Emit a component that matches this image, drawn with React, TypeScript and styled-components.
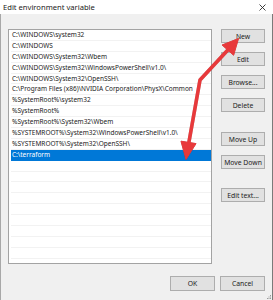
import styled, { createGlobalStyle } from 'styled-components';

const GlobalStyle = createGlobalStyle`
  html, body {
    margin: 0;
    padding: 0;
    background: #ffffff;
  }
  body {
    font-family: "Noto Sans", "Liberation Sans", sans-serif;
    color: #000000;
  }
`;

const paths = [
  'C:\\WINDOWS\\system32',
  'C:\\WINDOWS',
  'C:\\WINDOWS\\System32\\Wbem',
  'C:\\WINDOWS\\System32\\WindowsPowerShell\\v1.0\\',
  'C:\\WINDOWS\\System32\\OpenSSH\\',
  'C:\\Program Files (x86)\\NVIDIA Corporation\\PhysX\\Common',
  '%SystemRoot%\\system32',
  '%SystemRoot%',
  '%SystemRoot%\\System32\\Wbem',
  '%SYSTEMROOT%\\System32\\WindowsPowerShell\\v1.0\\',
  '%SYSTEMROOT%\\System32\\OpenSSH\\',
  'C:\\terraform',
];

const SELECTED = 11;
const ROW_COUNT = 22;

const rows = Array.from({ length: ROW_COUNT }, (_, i) => paths[i] ?? '');

const CloseIcon = () => (
  <svg width="7" height="7" viewBox="0 0 7 7">
    <path d="M0.5 0.5 L6.5 6.5 M6.5 0.5 L0.5 6.5" stroke="#2b2b2b" strokeWidth="0.9" />
  </svg>
);

const Arrow = () => (
  <ArrowSvg width="273" height="300" viewBox="0 0 273 300">
    <g fill="#e8393b" stroke="#e8393b" strokeLinejoin="round">
      <path
        d="M188.6 144 L200 80 L227.8 50"
        fill="none"
        strokeWidth="3.6"
        strokeLinecap="round"
      />
      <polygon points="238.5,38.5 233.6,55.2 222.1,45" strokeWidth="1" />
      <polygon points="186,159.5 196,143.6 181,141.2" strokeWidth="1" />
    </g>
  </ArrowSvg>
);

const ResizeGrip = () => (
  <Grip width="4" height="4" viewBox="0 0 4 4">
    <rect x="3" y="0" width="1" height="1" fill="#9a9a9a" />
    <rect x="1.5" y="1.5" width="1" height="1" fill="#9a9a9a" />
    <rect x="3" y="1.5" width="1" height="1" fill="#9a9a9a" />
    <rect x="0" y="3" width="1" height="1" fill="#9a9a9a" />
    <rect x="1.5" y="3" width="1" height="1" fill="#9a9a9a" />
    <rect x="3" y="3" width="1" height="1" fill="#9a9a9a" />
  </Grip>
);

export default function App() {
  return (
    <>
      <GlobalStyle />
      <DialogWindow>
        <TitleBar>
          <Title>Edit environment variable</Title>
          <CloseIcon />
        </TitleBar>
        <DialogBody>
          <MainArea>
            <PathList>
              {rows.map((text, i) => (
                <PathRow key={i} selected={i === SELECTED}>
                  {text}
                </PathRow>
              ))}
            </PathList>
            <ButtonColumn>
              <DialogButton>New</DialogButton>
              <DialogButton>Edit</DialogButton>
              <DialogButton>Browse...</DialogButton>
              <DialogButton>Delete</DialogButton>
              <DialogButton gapBefore={20}>Move Up</DialogButton>
              <DialogButton>Move Down</DialogButton>
              <DialogButton gapBefore={19}>Edit text...</DialogButton>
            </ButtonColumn>
          </MainArea>
          <Footer>
            <DialogButton wide>OK</DialogButton>
            <DialogButton wide>Cancel</DialogButton>
          </Footer>
          <ResizeGrip />
        </DialogBody>
        <Arrow />
      </DialogWindow>
    </>
  );
}

const DialogWindow = styled.div`
  position: relative;
  width: 273px;
  height: 300px;
  overflow: hidden;
  display: flex;
  flex-direction: column;
`;

const TitleBar = styled.div`
  display: flex;
  align-items: center;
  justify-content: space-between;
  height: 14px;
  padding: 0 7px 0 3px;
  background: #ffffff;
  box-sizing: border-box;
`;

const Title = styled.span`
  font-size: 7.6px;
  line-height: 14px;
  color: #1a1a1a;
  white-space: nowrap;
`;

const DialogBody = styled.div`
  position: relative;
  flex: 1;
  display: flex;
  flex-direction: column;
  padding: 15px 7px 9px 7px;
  background: #f0f0f0;
  border: 1px solid #7a7a7a;
  border-top: none;
  border-left-color: #a8a8a8;
  box-sizing: border-box;
`;

const MainArea = styled.div`
  display: flex;
  gap: 9px;
  height: 235px;
`;

const PathList = styled.div`
  width: 204px;
  height: 235px;
  padding-left: 2px;
  background: #ffffff;
  border: 1px solid #a3a3a3;
  box-sizing: border-box;
  overflow: hidden;
`;

const PathRow = styled.div<{ selected: boolean }>`
  height: 10.9px;
  line-height: 10.4px;
  padding-left: 1px;
  font-size: 6.5px;
  white-space: nowrap;
  overflow: hidden;
  box-sizing: border-box;
  border-bottom: 1px solid ${({ selected }) => (selected ? '#0078d7' : '#f2f2f2')};
  background: ${({ selected }) => (selected ? '#0078d7' : 'transparent')};
  color: ${({ selected }) => (selected ? '#ffffff' : '#1a1a1a')};
`;

const ButtonColumn = styled.div`
  display: flex;
  flex-direction: column;
  gap: 9px;
  width: 44px;
`;

const DialogButton = styled.div<{ gapBefore?: number; wide?: boolean }>`
  display: flex;
  align-items: center;
  justify-content: center;
  width: ${({ wide }) => (wide ? '45px' : '44px')};
  height: ${({ wide }) => (wide ? '15px' : '14px')};
  margin-top: ${({ gapBefore }) => (gapBefore ? `${gapBefore - 9}px` : '0')};
  background: #e1e1e1;
  border: 1px solid #adadad;
  box-sizing: border-box;
  font-size: 6.8px;
  color: #1a1a1a;
  white-space: nowrap;
`;

const Footer = styled.div`
  display: flex;
  justify-content: flex-end;
  gap: 5px;
  margin-top: 12px;
`;

const Grip = styled.svg`
  position: absolute;
  right: 1px;
  bottom: 1px;
`;

const ArrowSvg = styled.svg`
  position: absolute;
  left: 0;
  top: 0;
  pointer-events: none;
  filter: drop-shadow(0.5px 0.8px 0.6px rgba(0, 0, 0, 0.25));
`;
